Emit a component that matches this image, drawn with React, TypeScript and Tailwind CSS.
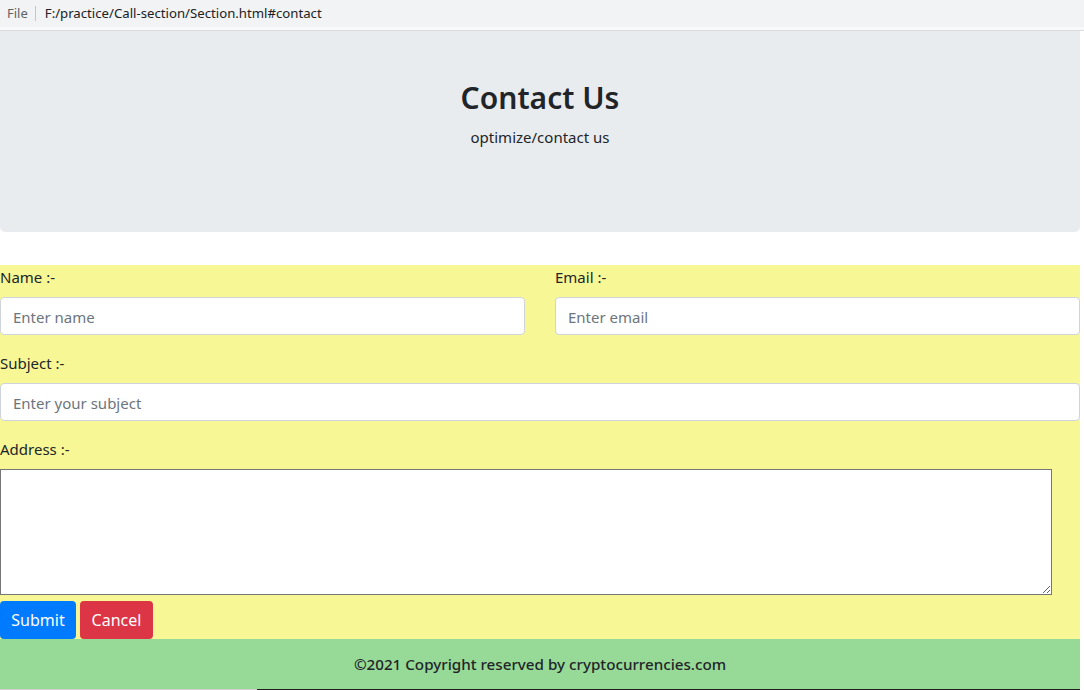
import React from "react";

export default function App() {
  const font = { fontFamily: '"Noto Sans", "Open Sans", sans-serif' };
  return (
    <div className="w-[1084px] h-[690px] bg-white overflow-hidden relative" style={font}>
      <div className="h-[27px] bg-[#f1f3f4] flex items-center text-[13px] leading-none">
        <span className="ml-[7px] text-[#5f6368]">File</span>
        <span className="ml-[7px] w-px h-[15px] bg-[#c4c7c5]"></span>
        <span className="ml-[9px] text-[#202124] text-[13.2px]">F:/practice/Call-section/Section.html#contact</span>
      </div>
      <div className="h-[4px] bg-[#f8f9fa] border-b border-[#dcdcdc]"></div>
      <div className="w-[1080px]">
        <div className="bg-[#e9ecef] rounded-b-[5px] h-[201px] pt-[48px] text-center text-[#212529]">
          <h2 className="text-[30px] leading-[38px] font-semibold mb-[8px]">Contact Us</h2>
          <p className="text-[15px] leading-[24px]">optimize/contact us</p>
        </div>
        <div className="h-[33px]"></div>
        <div className="bg-[#f7f795] text-[#212529] text-[15px]">
          <div className="flex gap-[30px]">
            <div className="w-[525px]">
              <div className="leading-[24px] h-[24px] mb-[8px]">Name :-</div>
              <input
                placeholder="Enter name"
                className="w-full h-[38px] bg-white border border-[#ced4da] rounded-[4px] px-[12px] pt-[2px] text-[15px] placeholder:text-[#6c757d] outline-none"
              />
            </div>
            <div className="w-[525px]">
              <div className="leading-[24px] h-[24px] mb-[8px]">Email :-</div>
              <input
                placeholder="Enter email"
                className="w-full h-[38px] bg-white border border-[#ced4da] rounded-[4px] px-[12px] pt-[2px] text-[15px] placeholder:text-[#6c757d] outline-none"
              />
            </div>
          </div>
          <div className="mt-[16px]">
            <div className="leading-[24px] h-[24px] mb-[8px]">Subject :-</div>
            <input
              placeholder="Enter your subject"
              className="w-full h-[38px] bg-white border border-[#ced4da] rounded-[4px] px-[12px] pt-[2px] text-[15px] placeholder:text-[#6c757d] outline-none"
            />
          </div>
          <div className="mt-[16px]">
            <div className="leading-[24px] h-[24px] mb-[8px]">Address :-</div>
            <textarea className="block w-[1052px] h-[126px] bg-white border border-[#767676] outline-none resize"></textarea>
          </div>
          <div className="flex gap-[4px] mt-[6px]">
            <button className="h-[38px] w-[76px] bg-[#007bff] text-white rounded-[4px] text-[16px]">Submit</button>
            <button className="h-[38px] w-[73px] bg-[#dc3545] text-white rounded-[4px] text-[16px]">Cancel</button>
          </div>
        </div>
        <div className="h-[50px] bg-[#97d996] flex items-center justify-center text-[#212529] text-[15.2px] font-medium">
          ©2021 Copyright reserved by cryptocurrencies.com
        </div>
      </div>
      <div className="absolute left-0 bottom-0 h-px w-[1080px] flex">
        <div className="w-[257px] bg-[#d0d0d0]"></div>
        <div className="flex-1 bg-[#202020]"></div>
      </div>
    </div>
  );
}
